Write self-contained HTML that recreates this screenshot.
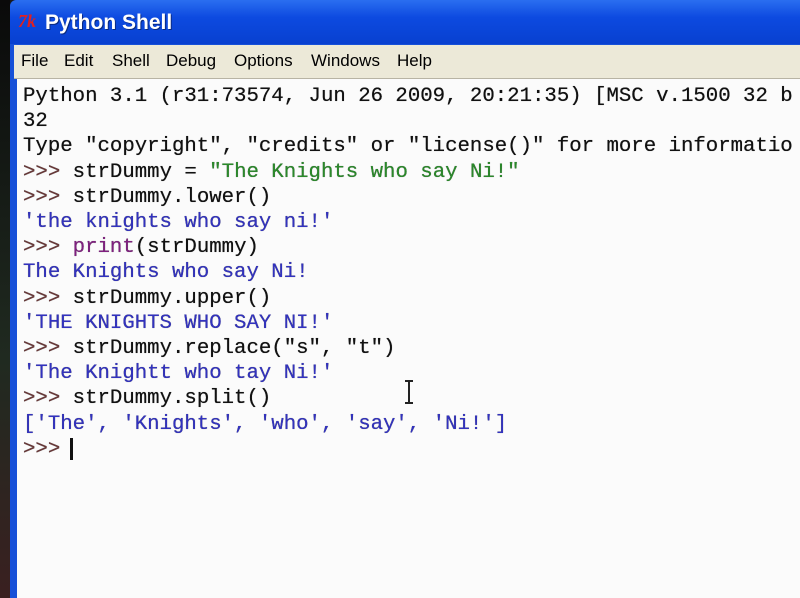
<!DOCTYPE html>
<html><head><meta charset="utf-8"><style>
body{margin:0;width:800px;height:598px;overflow:hidden;background:#1a1a1a;position:relative;font-family:"Liberation Sans",sans-serif}
#strip{position:absolute;left:0;top:0;width:10px;height:598px;background:linear-gradient(#0a0a0a,#202a20 60%,#3a2020)}
#win{position:absolute;left:10px;top:0;width:790px;height:598px;background:#1650d8;border-radius:6px 0 0 0}
#title{position:absolute;left:10px;top:0;width:790px;height:44px;background:linear-gradient(#2a6ef0,#0d4ae0 40%,#0840d0);border-radius:7px 0 0 0}
#title .t{position:absolute;left:35px;top:11px;color:#fff;font-size:21px;font-weight:bold;text-shadow:1px 1px #0a2a80}
#title .i{position:absolute;left:8px;top:11px;color:#e02020;font-size:18px;font-weight:bold;font-style:italic;font-family:"Liberation Serif",serif}
#menu{position:absolute;left:14px;top:45px;width:786px;height:33px;background:#ece9d8;border-bottom:1px solid #b8b4a4;overflow:hidden}
#menu span{position:absolute;top:6px;font-size:17px;color:#000}
#text{position:absolute;left:17px;top:79px;width:783px;height:519px;background:#fbfbfb}
pre{position:absolute;left:23px;top:84px;width:777px;overflow:hidden;margin:0;font-family:"Liberation Mono",monospace;font-size:20.7px;line-height:25.2px;color:#111;white-space:pre;text-shadow:0 0 0.5px #111}
.p{color:#6a3838}.g{color:#2a8a2a}.b{color:#3232c0}.m{color:#802080}
#cur{position:absolute;left:70px;top:438px;width:3px;height:22px;background:#111}
#ib{position:absolute;left:408px;top:380px;width:2px;height:24px;background:#222}
#ib:before,#ib:after{content:"";position:absolute;left:-3px;width:8px;height:2px;background:#222}
#ib:before{top:0}#ib:after{bottom:0}
</style></head><body>
<div id="strip"></div>
<div id="win"></div>
<div id="title"><span class="i">7k</span><span class="t">Python Shell</span></div>
<div id="menu">
<span style="left:7px">File</span><span style="left:50px">Edit</span><span style="left:98px">Shell</span><span style="left:152px">Debug</span><span style="left:220px">Options</span><span style="left:297px">Windows</span><span style="left:383px">Help</span>
</div>
<div id="text"></div>
<pre>Python 3.1 (r31:73574, Jun 26 2009, 20:21:35) [MSC v.1500 32 b
32
Type "copyright", "credits" or "license()" for more informatio
<span class="p">&gt;&gt;&gt; </span>strDummy = <span class="g">"The Knights who say Ni!"</span>
<span class="p">&gt;&gt;&gt; </span>strDummy.lower()
<span class="b">'the knights who say ni!'</span>
<span class="p">&gt;&gt;&gt; </span><span class="m">print</span>(strDummy)
<span class="b">The Knights who say Ni!</span>
<span class="p">&gt;&gt;&gt; </span>strDummy.upper()
<span class="b">'THE KNIGHTS WHO SAY NI!'</span>
<span class="p">&gt;&gt;&gt; </span>strDummy.replace("s", "t")
<span class="b">'The Knightt who tay Ni!'</span>
<span class="p">&gt;&gt;&gt; </span>strDummy.split()
<span class="b">['The', 'Knights', 'who', 'say', 'Ni!']</span>
<span class="p">&gt;&gt;&gt; </span></pre>
<div id="cur"></div>
<div id="ib"></div>
</body></html>
